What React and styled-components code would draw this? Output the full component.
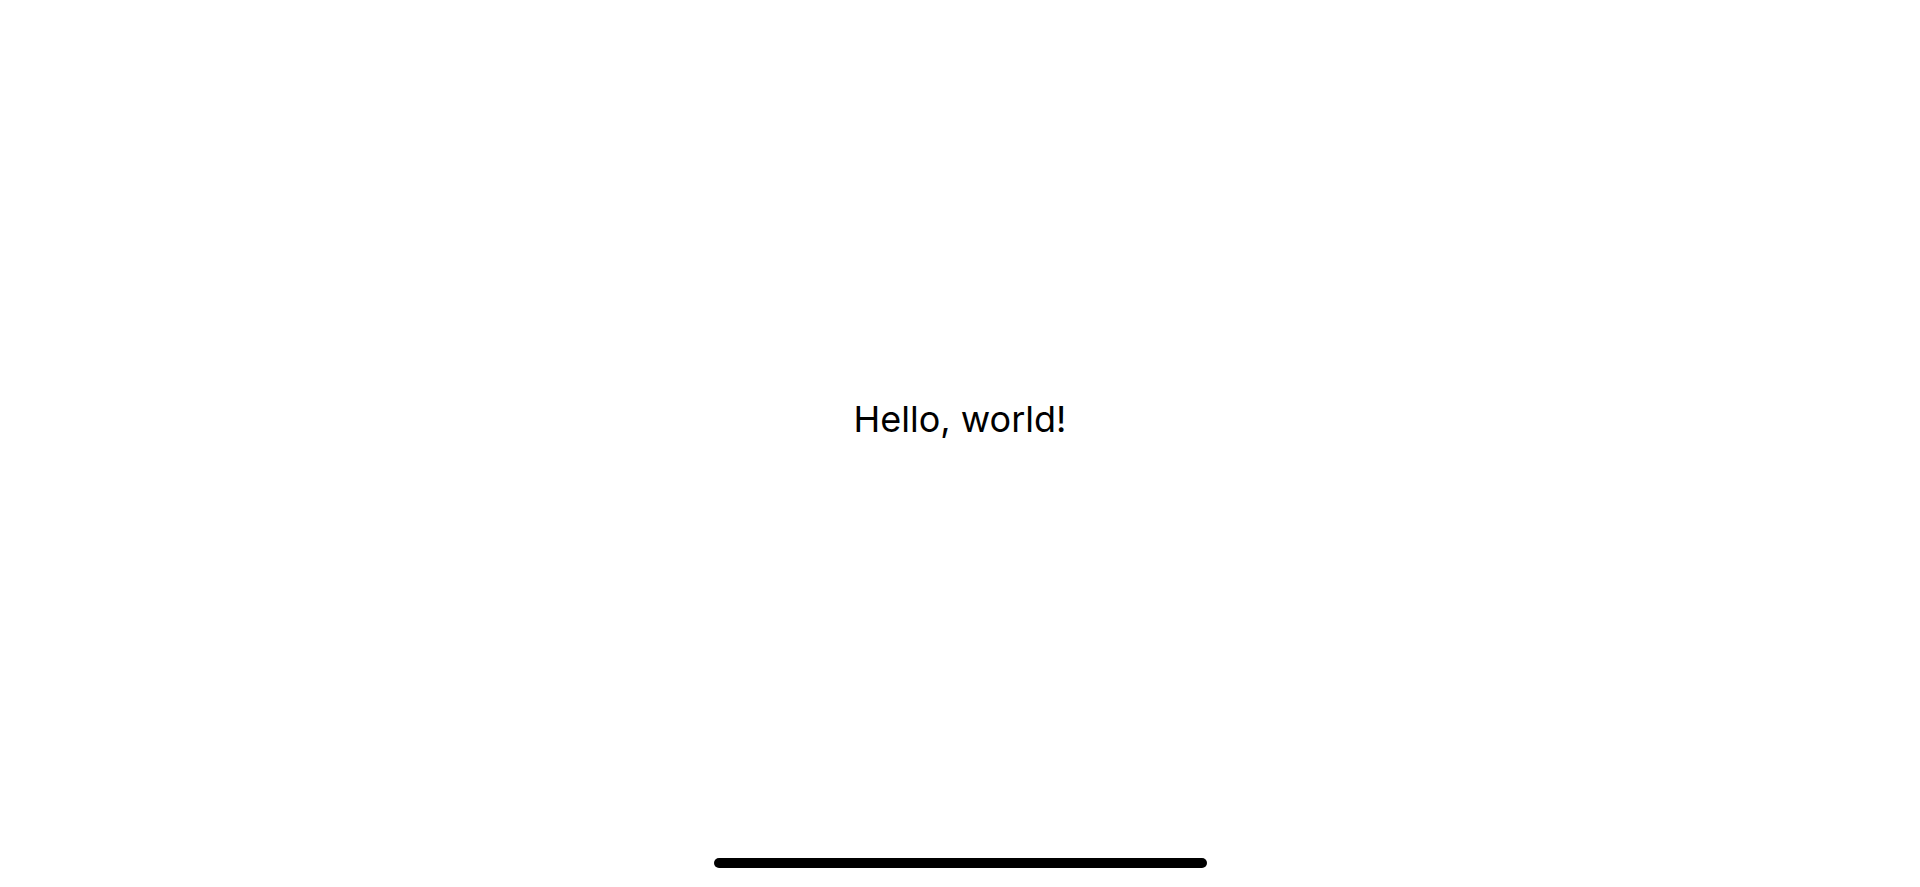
import React from "react";
import styled, { createGlobalStyle } from "styled-components";

const GlobalStyle = createGlobalStyle`
  html, body {
    margin: 0;
    padding: 0;
    background: #ffffff;
  }
  #root {
    height: 100vh;
  }
`;

const Screen = styled.div`
  height: 100vh;
  display: flex;
  flex-direction: column;
  background: #ffffff;
  font-family: Inter, "Noto Sans", "Liberation Sans", sans-serif;
`;

const Content = styled.main`
  flex: 1;
  display: flex;
  align-items: center;
  justify-content: center;
  padding-bottom: 10px;
`;

const Greeting = styled.span`
  font-size: 36px;
  line-height: 42px;
  color: #000000;
  font-weight: 400;
`;

const HomeBar = styled.div`
  display: flex;
  justify-content: center;
  padding: 10px 0 19px;
`;

const Indicator = styled.div`
  width: 493px;
  height: 10px;
  border-radius: 5px;
  background: #000000;
`;

export default function App() {
  return (
    <>
      <GlobalStyle />
      <Screen>
        <Content>
          <Greeting>Hello, world!</Greeting>
        </Content>
        <HomeBar>
          <Indicator />
        </HomeBar>
      </Screen>
    </>
  );
}
